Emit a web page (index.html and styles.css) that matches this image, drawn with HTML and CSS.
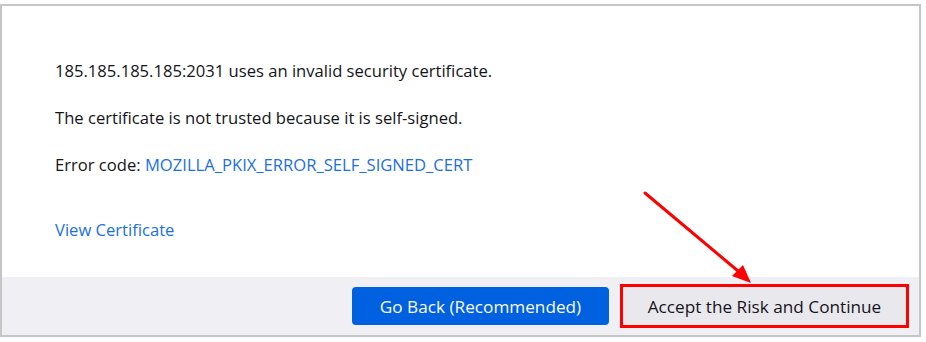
FILE: index.html
```html
<!DOCTYPE html>
<html>
<head>
<meta charset="utf-8">
<link rel="stylesheet" href="styles.css">
</head>
<body>
<div class="frame">
  <div class="content">
    <p class="line">185.185.185.185:2031 uses an invalid security certificate.</p>
    <p class="line">The certificate is not trusted because it is self-signed.</p>
    <p class="line">Error code: <a class="link">MOZILLA_PKIX_ERROR_SELF_SIGNED_CERT</a></p>
    <p class="line view"><a class="link">View Certificate</a></p>
  </div>
  <div class="footer">
    <button class="btn primary">Go Back (Recommended)</button>
    <button class="btn secondary">Accept the Risk and Continue</button>
  </div>
  <svg class="arrow" width="926" height="342" viewBox="0 0 926 342">
    <line x1="645" y1="193" x2="744" y2="276" stroke="#f00" stroke-width="3" stroke-linecap="round"/>
    <polygon points="751,283 732,276 743,265" fill="#f00"/>
  </svg>
</div>
</body>
</html>
```
FILE: styles.css
```css
html, body {
  margin: 0;
  padding: 0;
  background: #fff;
}
body {
  font-family: "Open Sans", "Noto Sans", sans-serif;
  color: #15141a;
}
.frame {
  margin-top: 4px;
  width: 917px;
  height: 329px;
  border: 2px solid #c6c6c6;
  display: flex;
  flex-direction: column;
}
.content {
  flex: 1;
  padding: 55px 0 0 53px;
  box-sizing: border-box;
}
.line {
  margin: 0 0 27px 0;
  font-size: 16.6px;
  line-height: 20px;
}
.line.view {
  margin-top: 45px;
}
.link {
  color: #1a6fe6;
  text-decoration: none;
}
.footer {
  height: 58px;
  background: #f0f0f4;
  display: flex;
  justify-content: flex-end;
  align-items: center;
  gap: 14px;
  padding-right: 13px;
}
.btn {
  height: 38px;
  border: none;
  border-radius: 4px;
  font-family: "Open Sans", "Noto Sans", sans-serif;
  font-size: 17.2px;
  font-weight: 500;
  padding: 0;
}
.primary {
  width: 257px;
  background: #0061e0;
  color: #fbfbfe;
}
.secondary {
  width: 283px;
  background: #e9e8ed;
  color: #15141a;
  outline: 3px solid #f00;
  border-radius: 0;
}
.arrow {
  position: absolute;
  left: 0;
  top: 0;
  pointer-events: none;
}
```
